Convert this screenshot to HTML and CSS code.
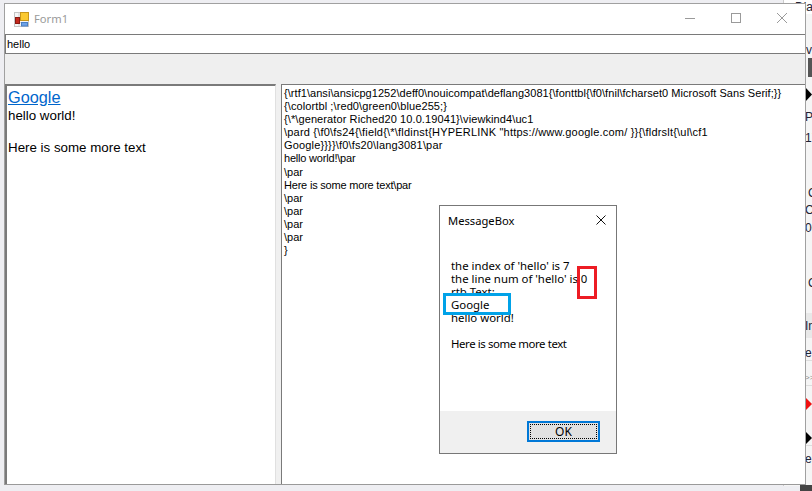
FILE: index.html
```html
<!DOCTYPE html>
<html lang="en">
<head>
<meta charset="utf-8">
<title>Form1</title>
<link rel="stylesheet" href="styles.css">
</head>
<body>
<div class="desktop">
  <aside class="behind">
    <div class="row top at795">Dia</div>
    <div class="row at798">Ev</div>
    <div class="row at808"><span class="bar"></span></div>
    <div class="row"><svg class="tri" width="7" height="15" viewBox="0 0 7 15"><path d="M0 0L7 7.5L0 15Z" fill="#000"/></svg></div>
    <div class="row">Pr</div>
    <div class="row">17</div>
    <div class="row at808">C</div>
    <div class="row">CF</div>
    <div class="row">00</div>
    <div class="row at808">C</div>
    <div class="row"><span class="shaded">In</span></div>
    <div class="row ruled">e</div>
    <div class="row ruled small">&gt;&gt;</div>
    <div class="row"><svg class="tri" width="7" height="14" viewBox="0 0 7 14"><path d="M0 0L7 7L0 14Z" fill="#f01010"/></svg></div>
    <div class="row ruled"><svg class="tri" width="7" height="14" viewBox="0 0 7 14"><path d="M0 0L7 7L0 14Z" fill="#000"/></svg></div>
    <div class="row">er</div>
  </aside>
  <div class="corner"></div>

  <main class="window">
    <header class="titlebar">
      <svg class="appicon" width="15" height="15" viewBox="0 0 15 15">
        <rect x="0.5" y="0.5" width="14" height="14" fill="#f6f6f6" stroke="#c4c4c4"/>
        <path d="M5 0.5V14.5M0.5 10.5H14.5" stroke="#d0d0d0" fill="none"/>
        <rect x="1.5" y="5.5" width="4" height="6" fill="#c4281c" stroke="#8a1a12"/>
        <rect x="6.5" y="0.5" width="8" height="8" fill="#fbc930" stroke="#c8961a"/>
        <rect x="7.5" y="10.5" width="6" height="3.5" fill="#6da2e6" stroke="#4a7fc4"/>
      </svg>
      <span class="title">Form1</span>
      <div class="controls">
        <svg class="ctl" width="46" height="30" viewBox="0 0 46 30"><path d="M18 14.5H28" stroke="#9a9a9a"/></svg>
        <svg class="ctl" width="46" height="30" viewBox="0 0 46 30"><rect x="18.5" y="9.5" width="9" height="9" fill="none" stroke="#9a9a9a"/></svg>
        <svg class="ctl" width="46" height="30" viewBox="0 0 46 30"><path d="M18 9L28 19M28 9L18 19" stroke="#9a9a9a" fill="none"/></svg>
      </div>
    </header>
    <div class="searchbox">hello</div>
    <div class="toolbar"></div>
    <div class="panes">
      <section class="rtb left">
        <a class="link">Google</a>
        <p>hello world!</p>
        <p>&nbsp;</p>
        <p>Here is some more text</p>
      </section>
      <section class="rtb right">
        <div class="code sym-c">{\rtf1\ansi\ansicpg1252\deff0\nouicompat\deflang3081{\fonttbl{\f0\fnil\fcharset0 Microsoft Sans Serif;}}</div>
        <div class="code sym-b">{\colortbl ;\red0\green0\blue255;}</div>
        <div class="code sym-b">{\*\generator Riched20 10.0.19041}\viewkind4\uc1</div>
        <div class="code sym-a">\pard {\f0\fs24{\field{\*\fldinst{HYPERLINK "https://www.google.com/ }}{\fldrslt{\ul\cf1</div>
        <div class="code sym-d">Google}}}}\f0\fs20\lang3081\par</div>
        <div class="code plain">hello world!\par</div>
        <div class="code">\par</div>
        <div class="code plain">Here is some more text\par</div>
        <div class="code">\par</div>
        <div class="code">\par</div>
        <div class="code">\par</div>
        <div class="code">\par</div>
        <div class="code">}</div>
      </section>
    </div>
  </main>

  <div class="dialog">
    <div class="dlg-title">
      <span>MessageBox</span>
      <svg width="10" height="10" viewBox="0 0 10 10"><path d="M0.5 0.5L9.5 9.5M9.5 0.5L0.5 9.5" stroke="#111" fill="none"/></svg>
    </div>
    <div class="dlg-body">
      <p>the index of 'hello' is 7</p>
      <p>the line num of 'hello' is 0</p>
      <p>rtb Text:</p>
      <p>Google</p>
      <p>hello world!</p>
      <p>&nbsp;</p>
      <p class="tight">Here is some more text</p>
    </div>
    <div class="dlg-foot">
      <button class="ok"><span class="ok-inner">OK</span></button>
    </div>
  </div>

  <div class="mark mark-red"></div>
  <div class="mark mark-blue"></div>
</div>
</body>
</html>
```
FILE: styles.css
```css
* { box-sizing: border-box; }
html, body { margin: 0; padding: 0; }
body { width: 812px; height: 491px; overflow: hidden; background: #eeeef2; }
p { margin: 0; }

.desktop { position: relative; width: 812px; height: 491px; overflow: hidden; }

.behind {
  position: absolute; left: 783px; top: 0; width: 29px; height: 486px;
  display: grid;
  grid-template-rows: 14px 43px 20px 25px 22px 21px 55px 17px 18px 55px 48px 23px 25px 25px 35px 20px;
  background: #f5f5f5;
  border-left: 1px solid #ccc;
  font: 12px/14px "Liberation Sans", sans-serif;
  color: #223;
  overflow: hidden;
}
.row {
  display: flex; align-items: flex-end; white-space: nowrap;
  padding-left: 21px;
}
.row.top { background: #fff; }
.row.at795 { padding-left: 11px; }
.row.at798 { padding-left: 14px; }
.row.at808 { padding-left: 24px; }
.row.ruled { border-bottom: 1px solid #ddd; }
.row.small { font-size: 8px; color: #888; }
.shaded { display: flex; align-items: center; height: 25px; width: 100%; background: #e8e8e8; }
.bar { display: block; width: 4px; height: 19px; background: #555; }
.tri { display: block; flex: none; }
.corner { position: absolute; left: 800px; top: 485px; width: 12px; height: 6px; background: #444; }

.window {
  position: absolute; left: 4px; top: 3px; width: 802px; height: 482px;
  display: flex; flex-direction: column;
  background: #f0f0f0;
  border: 1px solid #a0a0a0; border-bottom-color: #9a9a9a;
}
.titlebar {
  flex: none; height: 30px; background: #fff;
  display: flex; align-items: center; padding-left: 9px;
}
.appicon { flex: none; margin-right: 5px; }
.title { font: 11.2px "Noto Sans", sans-serif; color: #9a9a9a; padding-bottom: 2px; }
.controls { margin-left: auto; display: flex; align-items: center; height: 30px; }
.ctl { display: block; }

.searchbox {
  flex: none; height: 20px;
  background: #fff; border: 1px solid #7a7a7a; border-width: 1px 0;
  padding-left: 2px;
  font: 11px/18px "Liberation Sans", sans-serif; color: #000;
  box-shadow: inset 1px 0 0 #7a7a7a;
}
.toolbar { flex: none; height: 30px; background: #efefef; }

.panes { flex: 1; min-height: 0; display: flex; gap: 5px; background: #f0f0f0; }
.rtb {
  background: #fff;
  border-style: solid; border-color: #7a7a7a;
  color: #000;
  font: 13.33px/16px "Liberation Sans", sans-serif;
}
.left { width: 271px; flex: none; padding: 1px 0 0 1px; border-width: 2px 1px 0 2px; border-right-color: #e0e0e0; }
.link { display: block; color: #0066cc; text-decoration: underline; font-size: 16.3px; line-height: 21px; }
.right { flex: 1; min-width: 0; padding: 2px 0 0 2px; border-width: 1px 0 0 1px; overflow: hidden; }
.code { font-size: 11px; line-height: 13.1px; white-space: pre; }
.code.sym-a { letter-spacing: 0.2px; }
.code.sym-b { letter-spacing: 0.1px; }
.code.sym-c { letter-spacing: 0.05px; }
.code.sym-d { letter-spacing: 0.16px; }
.code.plain { letter-spacing: -0.2px; }

.dialog {
  position: absolute; left: 439px; top: 205px; width: 178px; height: 249px;
  background: #fff; border: 1px solid #777;
  display: flex; flex-direction: column;
  font: 11.4px/13px "Noto Sans", sans-serif; color: #000;
}
.dlg-title {
  flex: none; height: 28px; display: flex; align-items: center; justify-content: space-between;
  padding: 0 10px 0 8px; font-size: 11.2px;
}
.dlg-body { flex: 1; padding: 25px 0 0 11px; }
.tight { letter-spacing: -0.4px; }
.dlg-foot {
  flex: none; height: 42px; background: #f0f0f0;
  display: flex; justify-content: flex-end; align-items: flex-start;
  padding: 10px 16px 0 0;
}
.ok {
  width: 73px; height: 21px; padding: 1px; margin: 0;
  background: #e1e1e1; border: 2px solid #0078d7;
  font: 12px "Noto Sans", sans-serif; color: #000;
}
.ok-inner {
  display: flex; align-items: center; justify-content: center;
  width: 100%; height: 100%; border: 1px dotted #000;
}

.mark { position: absolute; background: transparent; }
.mark-red { left: 577px; top: 266px; width: 20px; height: 33px; border: 3px solid #ed1c24; }
.mark-blue { left: 443px; top: 293px; width: 68px; height: 22px; border: 3px solid #00a2e8; }
```
